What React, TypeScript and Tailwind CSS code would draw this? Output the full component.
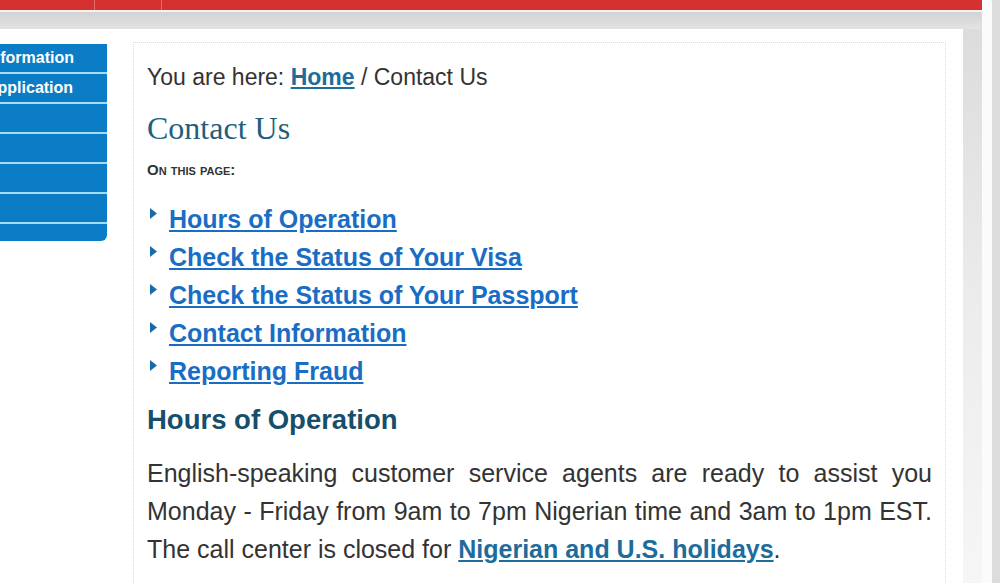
import React from 'react'

const sans = { fontFamily: "'Liberation Sans', Arial, sans-serif" }

const onThisPage = [
  'Hours of Operation',
  'Check the Status of Your Visa',
  'Check the Status of Your Passport',
  'Contact Information',
  'Reporting Fraud',
]

function Bullet() {
  return (
    <svg width="7" height="11" viewBox="0 0 7 11" className="mt-[8px] ml-[3px] shrink-0">
      <path d="M0 0 L7 5.5 L0 11 Z" fill="#1a6aa8" />
    </svg>
  )
}

function Sidebar() {
  // left edge is cut off by the window, like the screenshot
  const rows = [
    { label: 'Information', shift: '-ml-[14px]' },
    { label: 'Application', shift: '-ml-[14px]' },
    { label: '', shift: '' },
    { label: '', shift: '' },
    { label: '', shift: '' },
    { label: '', shift: '' },
  ]
  return (
    <div className="w-[107px] shrink-0 mt-[15px] self-start overflow-hidden rounded-br-[6px] bg-[#0b7dc6]">
      {rows.map((r, i) => (
        <div
          key={i}
          className="h-[30px] border-b-2 border-[#a6dcf4] flex items-center whitespace-nowrap"
        >
          <span className={`${r.shift} text-white font-bold text-[16px]`} style={sans}>
            {r.label}
          </span>
        </div>
      ))}
      <div className="h-[17px]" />
    </div>
  )
}

export default function App() {
  return (
    <div className="w-[1000px] h-[583px] overflow-hidden bg-white flex" style={sans}>
      <div className="w-[982px] flex flex-col">
        {/* red nav strip */}
        <div className="h-[10px] bg-[#d63131] flex">
          <div className="w-[95px] border-r border-[#e46b6b]" />
          <div className="w-[67px] border-r border-[#e46b6b]" />
        </div>
        <div className="h-[2px] bg-[#f4f4f4]" />
        <div className="h-[17px] bg-gradient-to-b from-[#d3d3d3] to-[#e3e3e3]" />

        <div className="flex flex-1">
          <div className="w-[963px] bg-white flex">
            <Sidebar />

            <div className="ml-[26px] mt-[13px] w-[813px] border border-dotted border-[#d9d9d9] border-b-0 px-[13px] pt-[19px]">
              <div className="text-[23px] leading-[30px] text-[#333]">
                You are here:{' '}
                <a className="font-bold underline text-[#1d6c9c]">Home</a> / Contact Us
              </div>

              <h1
                className="mt-[16px] text-[32px] leading-[40px] text-[#235f7c]"
                style={{ fontFamily: "'Liberation Serif', Georgia, serif" }}
              >
                Contact Us
              </h1>

              <div className="mt-[12px] text-[15px] leading-[20px] font-bold text-[#333] [font-variant:small-caps]">
                On this page:
              </div>

              <ul className="mt-[20px]">
                {onThisPage.map((t) => (
                  <li key={t} className="flex h-[38px] leading-[38px]">
                    <Bullet />
                    <a className="ml-[12px] text-[25px] font-bold underline text-[#1a6dc4]">{t}</a>
                  </li>
                ))}
              </ul>

              <h2 className="mt-[12px] text-[27.5px] leading-[36px] font-bold text-[#174e6c]">
                Hours of Operation
              </h2>

              <p className="mt-[16px] text-[25px] leading-[38px] text-[#333] text-justify">
                English-speaking customer service agents are ready to assist you Monday - Friday
                from 9am to 7pm Nigerian time and 3am to 1pm EST. The call center is closed for{' '}
                <a className="font-bold underline text-[#1d6c9c]">Nigerian and U.S. holidays</a>.
              </p>
            </div>
          </div>
          <div className="w-[19px] bg-gradient-to-b from-[#dcdcdc] via-[#ececec] to-[#f6f6f6]" />
        </div>
      </div>
      <div className="w-[10px] bg-[#fbfbfb]" />
      <div className="w-[8px] bg-[#dcdcdc]" />
    </div>
  )
}
